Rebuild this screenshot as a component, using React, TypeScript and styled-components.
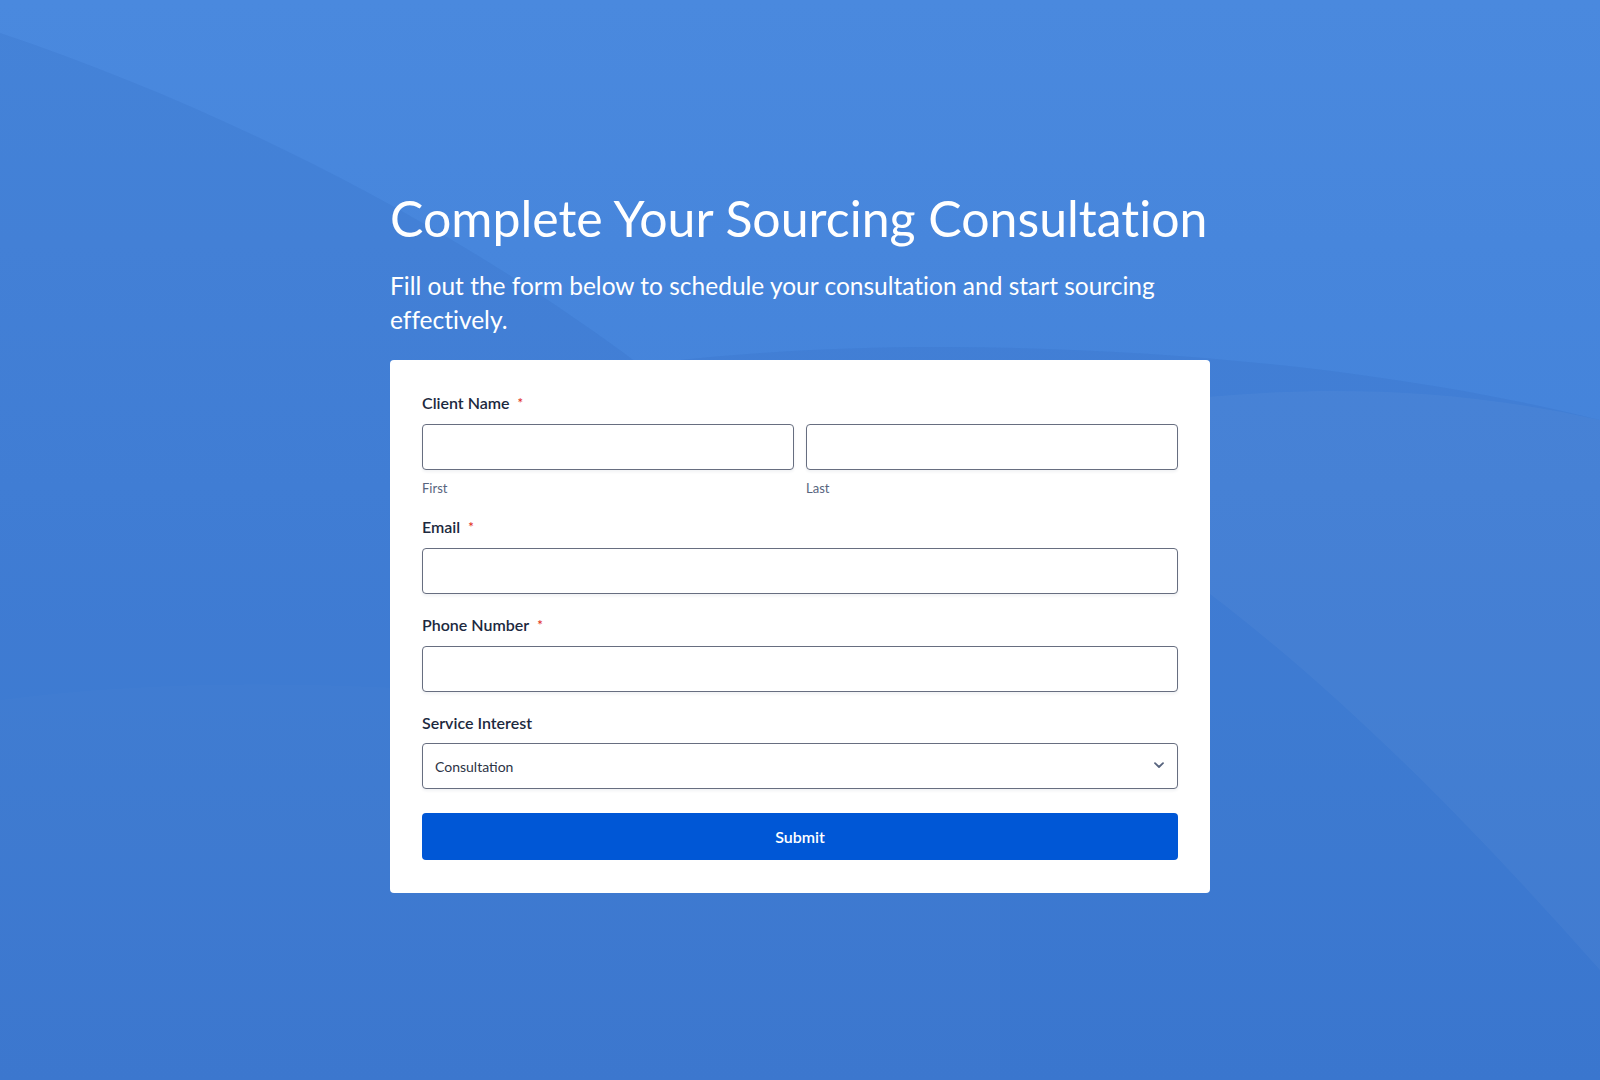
import React from 'react'
import styled, { createGlobalStyle } from 'styled-components'

const GlobalStyle = createGlobalStyle`
  html, body {
    margin: 0;
    padding: 0;
  }
  body {
    font-family: Lato, "Open Sans", Arial, sans-serif;
    font-variant-ligatures: none;
    background: #3f7bd4;
  }
  * {
    box-sizing: border-box;
  }
`

const Page = styled.div`
  position: relative;
  min-height: 100vh;
  display: flex;
  align-items: center;
  justify-content: center;
  overflow: hidden;
  background: linear-gradient(180deg, #4a89de 0%, #4483da 45%, #3e7bd3 100%);
`

// soft curved bands drawn behind the form
const Waves = styled.svg`
  position: absolute;
  inset: 0;
  width: 100%;
  height: 100%;
  z-index: 0;
`

const Content = styled.main`
  position: relative;
  z-index: 1;
  width: 820px;
  display: flex;
  flex-direction: column;
`

const Title = styled.h1`
  margin: 0;
  font-size: 50px;
  line-height: 62px;
  font-weight: 400;
  color: #fff;
  white-space: nowrap;
`

const Subtitle = styled.p`
  margin: 20px 0 23px;
  font-size: 24.5px;
  line-height: 34px;
  font-weight: 400;
  color: #fff;
`

const Card = styled.form`
  background: #fff;
  border-radius: 4px;
  padding: 32px 32px 33px;
  display: flex;
  flex-direction: column;
  gap: 20px;
`

const Field = styled.div`
  display: flex;
  flex-direction: column;
`

const Label = styled.label`
  font-size: 16px;
  line-height: 21px;
  font-weight: 600;
  color: #1c2940;
  margin-bottom: 10px;
`

const Required = styled.span`
  color: #e2331f;
  font-size: 13px;
  margin-left: 8px;
  vertical-align: 1px;
`

const NameRow = styled.div`
  display: grid;
  grid-template-columns: 1fr 1fr;
  column-gap: 12px;
`

const NamePart = styled.div`
  display: flex;
  flex-direction: column;
`

const TextInput = styled.input`
  width: 100%;
  height: 46px;
  border: 1px solid #676e80;
  border-radius: 4px;
  box-shadow: 0 2px 3px rgba(15, 30, 60, 0.06);
  padding: 0 12px;
  font-family: inherit;
  font-size: 14px;
  color: #2c3345;
  background: #fff;
  outline: none;
`

const SubLabel = styled.span`
  margin-top: 10px;
  font-size: 13px;
  line-height: 16px;
  color: #57647e;
`

const SelectWrap = styled.div`
  position: relative;
`

const Select = styled.select`
  width: 100%;
  height: 46px;
  appearance: none;
  border: 1px solid #676e80;
  border-radius: 4px;
  box-shadow: 0 2px 3px rgba(15, 30, 60, 0.06);
  padding: 0 36px 0 12px;
  font-family: inherit;
  font-size: 14px;
  color: #2c3345;
  background: #fff;
  outline: none;
`

const Chevron = styled.svg`
  position: absolute;
  right: 13px;
  top: 50%;
  width: 12px;
  height: 12px;
  margin-top: -7px;
  pointer-events: none;
`

const SubmitButton = styled.button`
  margin-top: 4px;
  height: 47px;
  border: none;
  border-radius: 4px;
  background: #0057d6;
  color: #fff;
  font-family: inherit;
  font-size: 16px;
  font-weight: 600;
  cursor: pointer;
`

const App = () => {
  return (
    <>
      <GlobalStyle />
      <Page>
        <Waves viewBox="0 0 1600 1080" preserveAspectRatio="none">
          <path
            d="M0,33 C230,110 460,230 640,365 C900,330 1300,345 1600,420 L1600,1080 L0,1080 Z"
            fill="rgba(20, 55, 140, 0.07)"
          />
          <path
            d="M960,440 C1220,560 1440,790 1600,970 L1600,420 C1380,370 1160,390 960,440 Z"
            fill="rgba(255, 255, 255, 0.035)"
          />
          <path
            d="M0,700 C300,660 700,700 1000,780 L1000,1080 L0,1080 Z"
            fill="rgba(255, 255, 255, 0.012)"
          />
        </Waves>
        <Content>
          <Title>Complete Your Sourcing Consultation</Title>
          <Subtitle>
            Fill out the form below to schedule your consultation and start sourcing effectively.
          </Subtitle>
          <Card onSubmit={(e) => e.preventDefault()}>
            <Field>
              <Label>
                Client Name<Required>*</Required>
              </Label>
              <NameRow>
                <NamePart>
                  <TextInput type="text" />
                  <SubLabel>First</SubLabel>
                </NamePart>
                <NamePart>
                  <TextInput type="text" />
                  <SubLabel>Last</SubLabel>
                </NamePart>
              </NameRow>
            </Field>
            <Field>
              <Label>
                Email<Required>*</Required>
              </Label>
              <TextInput type="email" />
            </Field>
            <Field>
              <Label>
                Phone Number<Required>*</Required>
              </Label>
              <TextInput type="tel" />
            </Field>
            <Field>
              <Label>Service Interest</Label>
              <SelectWrap>
                <Select defaultValue="Consultation">
                  <option>Consultation</option>
                </Select>
                <Chevron viewBox="0 0 12 12">
                  <path
                    d="M2 4.2 L6 8 L10 4.2"
                    fill="none"
                    stroke="#57647e"
                    strokeWidth="1.8"
                    strokeLinecap="round"
                    strokeLinejoin="round"
                  />
                </Chevron>
              </SelectWrap>
            </Field>
            <SubmitButton type="submit">Submit</SubmitButton>
          </Card>
        </Content>
      </Page>
    </>
  )
}

export default App
